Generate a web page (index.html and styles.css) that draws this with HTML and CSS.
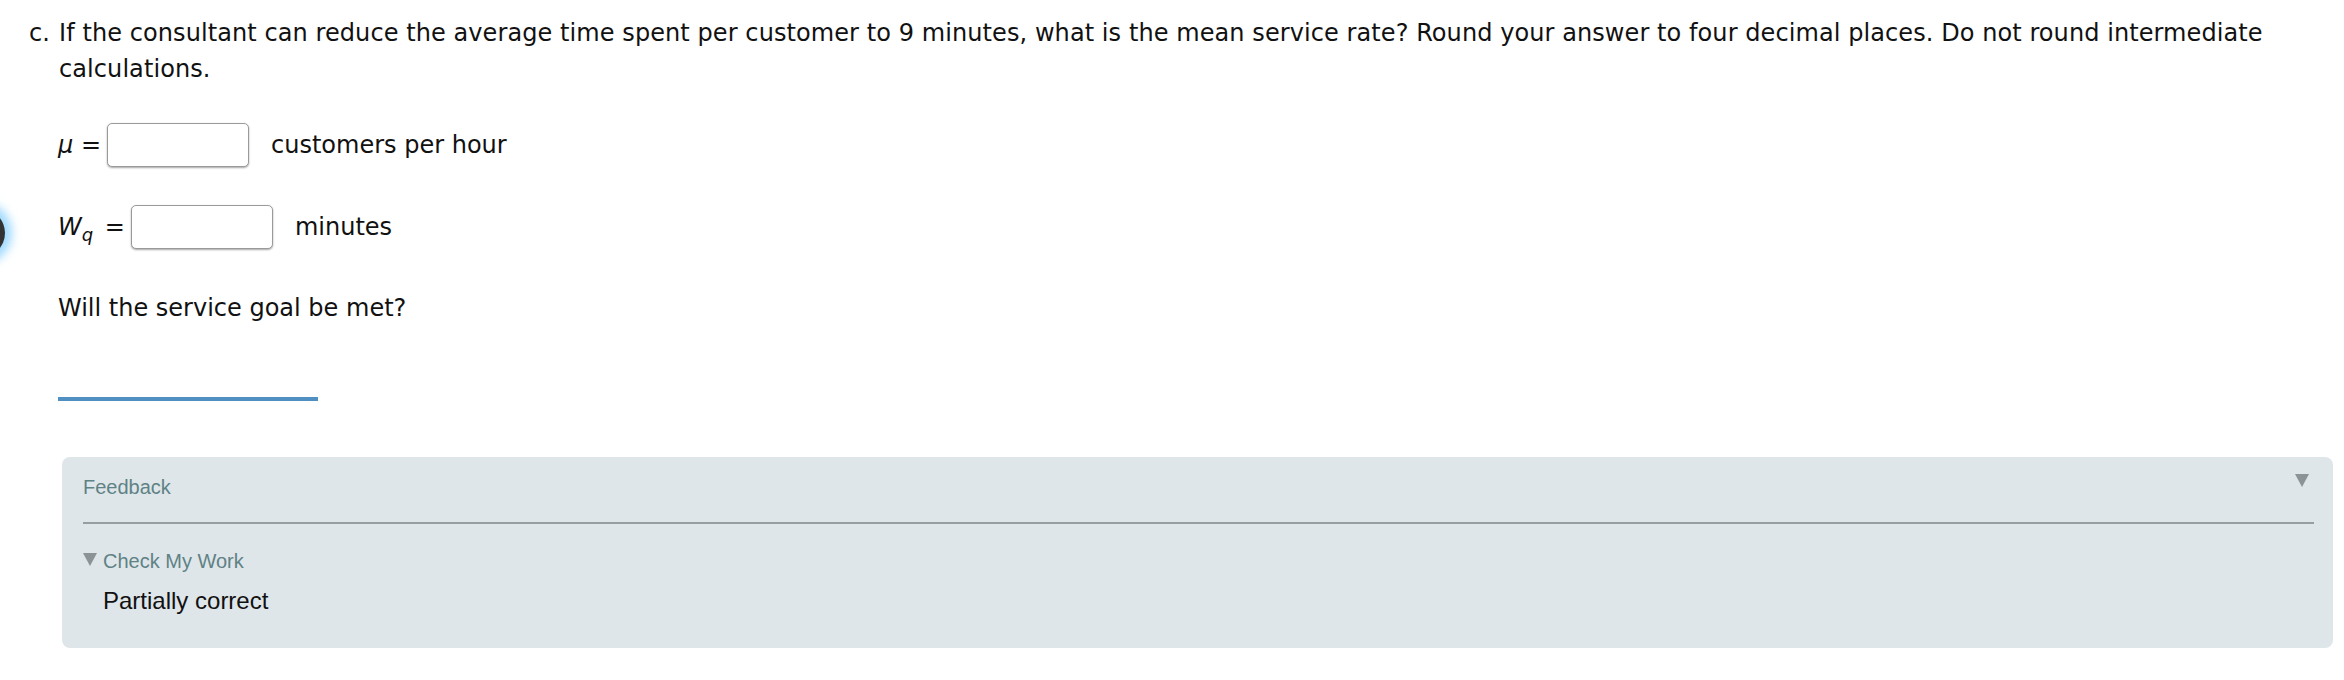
FILE: index.html
```html
<!DOCTYPE html>
<html lang="en">
<head>
<meta charset="utf-8">
<title>Question c</title>
<link rel="stylesheet" href="styles.css">
</head>
<body>
<div class="assist-bubble" aria-hidden="true"></div>
<div class="question">
  <div class="q-text">
    <span class="q-label">c.</span>
    <p class="q-prompt">If the consultant can reduce the average time spent per customer to 9 minutes, what is the mean service rate? Round your answer to four decimal places. Do not round intermediate calculations.</p>
  </div>
  <div class="q-body">
    <div class="answer-row row-mu">
      <span class="math"><i>μ</i> =</span>
      <input class="answer-box" type="text" aria-label="mu">
      <span class="unit">customers per hour</span>
    </div>
    <div class="answer-row row-wq">
      <span class="math"><i>W</i><sub><i>q</i></sub> =</span>
      <input class="answer-box" type="text" aria-label="Wq">
      <span class="unit">minutes</span>
    </div>
    <p class="goal">Will the service goal be met?</p>
    <div class="dropdown-line"></div>
  </div>
</div>
<div class="feedback">
  <div class="feedback-head">
    <span class="feedback-title">Feedback</span>
    <span class="tri tri-head"></span>
  </div>
  <div class="check">
    <span class="tri tri-small"></span>
    <span class="check-title">Check My Work</span>
  </div>
  <div class="result">Partially correct</div>
</div>
</body>
</html>
```

FILE: styles.css
```css
html, body {
  margin: 0;
  padding: 0;
  background: #ffffff;
}

body {
  position: relative;
  width: 2344px;
  height: 680px;
  overflow: hidden;
  font-family: "DejaVu Sans", Verdana, sans-serif;
  font-size: 24px;
  color: #111;
}

.assist-bubble {
  position: absolute;
  left: -43px;
  top: 209px;
  width: 48px;
  height: 48px;
  border-radius: 50%;
  background: #333;
  box-shadow: 0 0 10px 7px rgba(130, 205, 255, 0.75);
}

.question {
  padding-top: 15px;
}

.q-text {
  display: flex;
  padding-left: 29px;
  padding-right: 14px;
  line-height: 36px;
  letter-spacing: 0.08px;
}

.q-label {
  flex: 0 0 30px;
}

.q-prompt {
  margin: 0;
  flex: 1;
}

.q-body {
  padding-left: 58px;
}

.answer-row {
  display: flex;
  align-items: center;
  height: 44px;
}

.row-mu {
  margin-top: 36px;
}

.row-wq {
  margin-top: 38px;
}

.math {
  white-space: nowrap;
  margin-right: 6px;
}

.math sub {
  font-size: 18px;
  vertical-align: -6px;
  line-height: 0;
  margin-left: 0;
  margin-right: 4px;
}

.answer-box {
  box-sizing: border-box;
  width: 142px;
  height: 44px;
  margin: 0 22px 0 0;
  padding: 0;
  border: 1px solid #9a9a9a;
  border-radius: 5px;
  background: #fff;
  box-shadow: 0 1px 2px rgba(0, 0, 0, 0.35);
}

.unit {
  white-space: nowrap;
}

.goal {
  margin: 41px 0 0;
  line-height: 36px;
}

.dropdown-line {
  width: 260px;
  height: 4px;
  margin-top: 71px;
  background: #4f8fc1;
}

.feedback {
  margin: 56px 11px 0 62px;
  padding: 19px 19px 33px 21px;
  background: #dfe6e9;
  border-radius: 8px;
  font-family: "Liberation Sans", Arial, sans-serif;
}

.feedback-head {
  display: flex;
  justify-content: space-between;
  align-items: flex-start;
  padding-bottom: 23px;
  border-bottom: 2px solid #959ea1;
  font-size: 20px;
  color: #5e8285;
}

.tri {
  display: block;
  width: 0;
  height: 0;
  border-left: 7px solid transparent;
  border-right: 7px solid transparent;
  border-top: 13px solid #8b9396;
  filter: blur(0.6px);
}

.tri-head {
  margin-top: -2px;
  margin-right: 5px;
}

.check {
  display: flex;
  align-items: flex-start;
  margin-top: 26px;
  font-size: 20px;
  color: #5e8285;
}

.tri-small {
  margin-top: 3px;
  margin-right: 6px;
}

.result {
  margin: 14px 0 0 20px;
  font-size: 24px;
  color: #111;
}
```
